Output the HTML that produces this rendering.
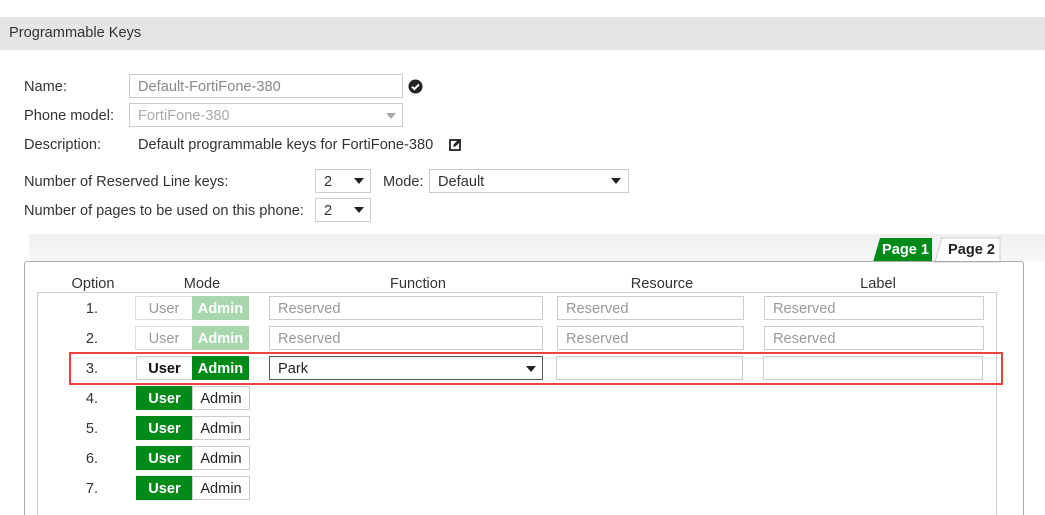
<!DOCTYPE html>
<html><head><meta charset="utf-8"><style>
*{box-sizing:border-box;margin:0;padding:0}
html,body{width:1045px;height:515px;overflow:hidden}
body{background:#fff;font-family:"Liberation Sans",sans-serif;font-size:14.6px;color:#333;position:relative}
.a{position:absolute;white-space:nowrap}
.inp{position:absolute;border:1px solid #ccc;background:#fff;height:24px;line-height:22px;padding-top:1px;padding-left:8px;color:#888;overflow:hidden;white-space:nowrap}
.tri{position:absolute;width:0;height:0;border-left:5px solid transparent;border-right:5px solid transparent;border-top:6px solid #222}
.lab{position:absolute;line-height:16px;white-space:nowrap}
.btn{position:absolute;height:24px;line-height:22px;padding-top:1px;text-align:center;font-weight:bold;border:1px solid #ccc}
.num{position:absolute;width:40px;text-align:center;left:72px}
.hd{position:absolute;text-align:center;top:276px}
</style></head><body>
<div class="a" style="left:0;top:17px;width:1045px;height:33px;background:#e5e5e5"></div>
<div class="a" style="left:9px;top:25px;color:#333">Programmable Keys</div>

<div class="lab" style="left:24px;top:79px">Name:</div>
<div class="inp" style="left:129px;top:74px;width:274px">Default-FortiFone-380</div>
<svg class="a" style="left:408px;top:79px" width="15" height="15" viewBox="0 0 15 15"><circle cx="7.5" cy="7.5" r="7" fill="#222"/><path d="M4 7.7l2.4 2.4 4.6-4.6" stroke="#fff" stroke-width="2" fill="none"/></svg>

<div class="lab" style="left:24px;top:108px">Phone model:</div>
<div class="inp" style="left:129px;top:103px;width:274px;color:#aaa">FortiFone-380</div>
<div class="tri" style="left:386px;top:113px;border-top-color:#aaa"></div>

<div class="lab" style="left:24px;top:137px">Description:</div>
<div class="lab" style="left:138px;top:137px;color:#333">Default programmable keys for FortiFone-380</div>
<svg class="a" style="left:449px;top:138px" width="13" height="13" viewBox="0 0 13 13"><rect x="1" y="2" width="10" height="10" fill="none" stroke="#222" stroke-width="1.8"/><path d="M4 9l1-3 5-5 2 2-5 5z" fill="#222"/></svg>

<div class="lab" style="left:24px;top:174px">Number of Reserved Line keys:</div>
<div class="inp" style="left:315px;top:169px;width:56px;color:#333">2</div>
<div class="tri" style="left:354px;top:178px"></div>
<div class="lab" style="left:383px;top:174px">Mode:</div>
<div class="inp" style="left:429px;top:169px;width:200px;color:#333">Default</div>
<div class="tri" style="left:611px;top:178px"></div>

<div class="lab" style="left:24px;top:203px">Number of pages to be used on this phone:</div>
<div class="inp" style="left:315px;top:198px;width:56px;color:#333">2</div>
<div class="tri" style="left:354px;top:207px"></div>

<div class="a" style="left:29px;top:234px;width:1016px;height:28px;background:linear-gradient(#efefef,#f7f7f7)"></div>
<svg class="a" style="left:868px;top:237px" width="135" height="26"><polygon points="5,25 12,1 64,1 64,25" fill="#008a17"/><polygon points="67,25 74,1 132,1 132,25" fill="#fff" stroke="#ccc"/></svg>
<div class="a" style="left:882px;top:242px;color:#fff;font-weight:bold">Page 1</div>
<div class="a" style="left:948px;top:242px;color:#222;font-weight:bold">Page 2</div>

<div class="a" style="left:24px;top:261px;width:1000px;height:270px;border:1px solid #aaa;border-radius:3px"></div>
<div class="a" style="left:37px;top:292px;width:960px;height:240px;border:1px solid #ccc;border-bottom:none"></div>

<div class="hd" style="left:63px;width:60px">Option</div>
<div class="hd" style="left:162px;width:80px">Mode</div>
<div class="hd" style="left:378px;width:80px">Function</div>
<div class="hd" style="left:612px;width:100px">Resource</div>
<div class="hd" style="left:838px;width:80px">Label</div>

<div class="num" style="top:301px">1.</div>
<div class="btn" style="left:135px;top:296px;width:58px;color:#999;font-weight:normal;border-color:#ddd">User</div>
<div class="btn" style="left:192px;top:296px;width:57px;background:#a8d6ad;color:#fff;border-color:#a8d6ad">Admin</div>
<div class="inp" style="left:269px;top:296px;width:274px;color:#999">Reserved</div>
<div class="inp" style="left:557px;top:296px;width:187px;color:#999">Reserved</div>
<div class="inp" style="left:764px;top:296px;width:220px;color:#999">Reserved</div>

<div class="num" style="top:331px">2.</div>
<div class="btn" style="left:135px;top:326px;width:58px;color:#999;font-weight:normal;border-color:#ddd">User</div>
<div class="btn" style="left:192px;top:326px;width:57px;background:#a8d6ad;color:#fff;border-color:#a8d6ad">Admin</div>
<div class="inp" style="left:269px;top:326px;width:274px;color:#999">Reserved</div>
<div class="inp" style="left:557px;top:326px;width:187px;color:#999">Reserved</div>
<div class="inp" style="left:764px;top:326px;width:220px;color:#999">Reserved</div>

<div class="num" style="top:361px">3.</div>
<div class="btn" style="left:136px;top:356px;width:57px;color:#111;border-color:#ccc">User</div>
<div class="btn" style="left:192px;top:356px;width:57px;background:#008a17;color:#fff;border-color:#008a17">Admin</div>
<div class="inp" style="left:269px;top:356px;width:274px;color:#222;border-color:#555">Park</div>
<div class="tri" style="left:526px;top:366px"></div>
<div class="inp" style="left:556px;top:356px;width:187px"></div>
<div class="inp" style="left:763px;top:356px;width:220px"></div>
<div class="a" style="left:69px;top:352px;width:934px;height:33px;border:2px solid #f04040"></div>

<div class="num" style="top:391px">4.</div>
<div class="btn" style="left:136px;top:386px;width:57px;background:#008a17;color:#fff;border-color:#008a17">User</div>
<div class="btn" style="left:192px;top:386px;width:58px;color:#222;font-weight:normal">Admin</div>
<div class="num" style="top:421px">5.</div>
<div class="btn" style="left:136px;top:416px;width:57px;background:#008a17;color:#fff;border-color:#008a17">User</div>
<div class="btn" style="left:192px;top:416px;width:58px;color:#222;font-weight:normal">Admin</div>
<div class="num" style="top:451px">6.</div>
<div class="btn" style="left:136px;top:446px;width:57px;background:#008a17;color:#fff;border-color:#008a17">User</div>
<div class="btn" style="left:192px;top:446px;width:58px;color:#222;font-weight:normal">Admin</div>
<div class="num" style="top:481px">7.</div>
<div class="btn" style="left:136px;top:476px;width:57px;background:#008a17;color:#fff;border-color:#008a17">User</div>
<div class="btn" style="left:192px;top:476px;width:58px;color:#222;font-weight:normal">Admin</div>
</body></html>
